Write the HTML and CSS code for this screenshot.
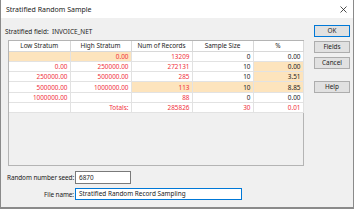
FILE: index.html
```html
<!DOCTYPE html>
<html>
<head>
<meta charset="utf-8">
<link rel="stylesheet" href="styles.css">
</head>
<body>
<div class="window">
  <div class="titlebar">
    <span class="title">Stratified Random Sample</span>
    <svg class="close" width="7" height="7" viewBox="0 0 7 7"><path d="M0.5 0.5 L6.5 6.5 M6.5 0.5 L0.5 6.5" stroke="#222" stroke-width="0.8" fill="none"/></svg>
  </div>
  <div class="body">
    <div class="main">
      <div class="field-label">Stratified field:&nbsp; INVOICE_NET</div>
      <div class="grid">
        <table>
          <colgroup><col class="c"><col class="c"><col class="c"><col class="c"><col class="cl"></colgroup>
          <thead>
            <tr><th>Low Stratum</th><th>High Stratum</th><th>Num of Records</th><th>Sample Size</th><th>%</th></tr>
          </thead>
          <tbody>
            <tr><td class="hl"></td><td class="red hl">0.00</td><td class="red">13209</td><td>0</td><td>0.00</td></tr>
            <tr><td class="red">0.00</td><td class="red">250000.00</td><td class="red">272131</td><td>10</td><td class="hl">0.00</td></tr>
            <tr><td class="red">250000.00</td><td class="red">500000.00</td><td class="red">285</td><td>10</td><td class="hl">3.51</td></tr>
            <tr><td class="red">500000.00</td><td class="red">1000000.00</td><td class="red hl">113</td><td class="hl">10</td><td class="hl">8.85</td></tr>
            <tr><td class="red">1000000.00</td><td></td><td class="red">88</td><td>0</td><td>0.00</td></tr>
            <tr><td></td><td class="red">Totals:</td><td class="red">285826</td><td class="red">30</td><td class="red">0.01</td></tr>
          </tbody>
        </table>
      </div>
      <div class="form">
        <div class="row"><label class="lbl">Random number seed:</label><div class="input seed">6870</div></div>
        <div class="row"><label class="lbl right">File name:</label><div class="input file focus">Stratified Random Record Sampling</div></div>
      </div>
    </div>
    <div class="buttons">
      <div class="btn default">OK</div>
      <div class="btn">Fields</div>
      <div class="btn">Cancel</div>
      <div class="btn help">Help</div>
    </div>
  </div>
</div>
</body>
</html>
```
FILE: styles.css
```css
* { box-sizing: border-box; }
html, body { margin: 0; padding: 0; background: #ffffff; }
body {
  font-family: "Noto Sans", "Open Sans", "DejaVu Sans", sans-serif;
  font-size: 6.4px;
  color: #1a1a1a;
}
.window {
  width: 354px;
  height: 209px;
  border-left: 1px solid #8a8a8a;
  border-right: 1px solid #8a8a8a;
  border-bottom: 2px solid #8a8a8a;
  background: #f0f0f0;
  display: flex;
  flex-direction: column;
}
.titlebar {
  height: 18px;
  background: #ffffff;
  display: flex;
  align-items: center;
  justify-content: space-between;
  padding: 1px 6px 0 5px;
}
.title { font-size: 7px; color: #222; }
.body {
  flex: 1;
  display: flex;
}
.main {
  width: 303px;
  padding-left: 4px;
}
.field-label {
  margin-top: 9px;
  height: 9px;
  line-height: 9px;
}
.grid {
  margin-top: 4px;
  margin-left: 3px;
  width: 296px;
  height: 126px;
  border: 1px solid #b4b4b4;
  background: #f0f0f0;
}
table {
  border-collapse: collapse;
  table-layout: fixed;
  width: 294px;
}
col.c { width: 61px; }
col.cl { width: 50px; }
th {
  height: 10px;
  font-weight: normal;
  background: #ffffff;
  border-right: 1px solid #d8d8d8;
  border-bottom: 1px solid #d8d8d8;
  padding: 0;
  line-height: 9px;
  text-align: center;
  color: #222;
}
td {
  height: 10.3px;
  padding: 0 2px 0 0;
  line-height: 9px;
  text-align: right;
  background: #ffffff;
  border-right: 1px solid #e2e2e2;
  border-bottom: 1px solid #e2e2e2;
  color: #222;
  white-space: nowrap;
  overflow: hidden;
}
td.red { color: #f0303a; }
td.hl { background: #fde4bd; }
.form {
  margin-top: 5px;
  display: flex;
  flex-direction: column;
  gap: 4px;
}
.row {
  display: flex;
  align-items: center;
}
.lbl {
  width: 70px;
  padding-left: 2px;
  white-space: nowrap;
  letter-spacing: -0.08px;
}
.lbl.right { text-align: right; padding-left: 0; padding-right: 1px; }
.input {
  background: #ffffff;
  border: 1px solid #7a7a7a;
  height: 13px;
  line-height: 11px;
  padding-left: 3px;
  white-space: nowrap;
}
.input.seed { width: 56px; }
.input.file { width: 167px; height: 12px; line-height: 10px; }
.input.focus { border-color: #0078d7; }
.buttons {
  width: 36px;
  margin-left: 10px;
  padding-top: 7px;
  display: flex;
  flex-direction: column;
  gap: 4px;
}
.btn {
  height: 12px;
  line-height: 10px;
  text-align: center;
  background: #e1e1e1;
  border: 1px solid #adadad;
  color: #222;
}
.btn.default { border-color: #0078d7; }
.btn.help { margin-top: 8px; }
```
